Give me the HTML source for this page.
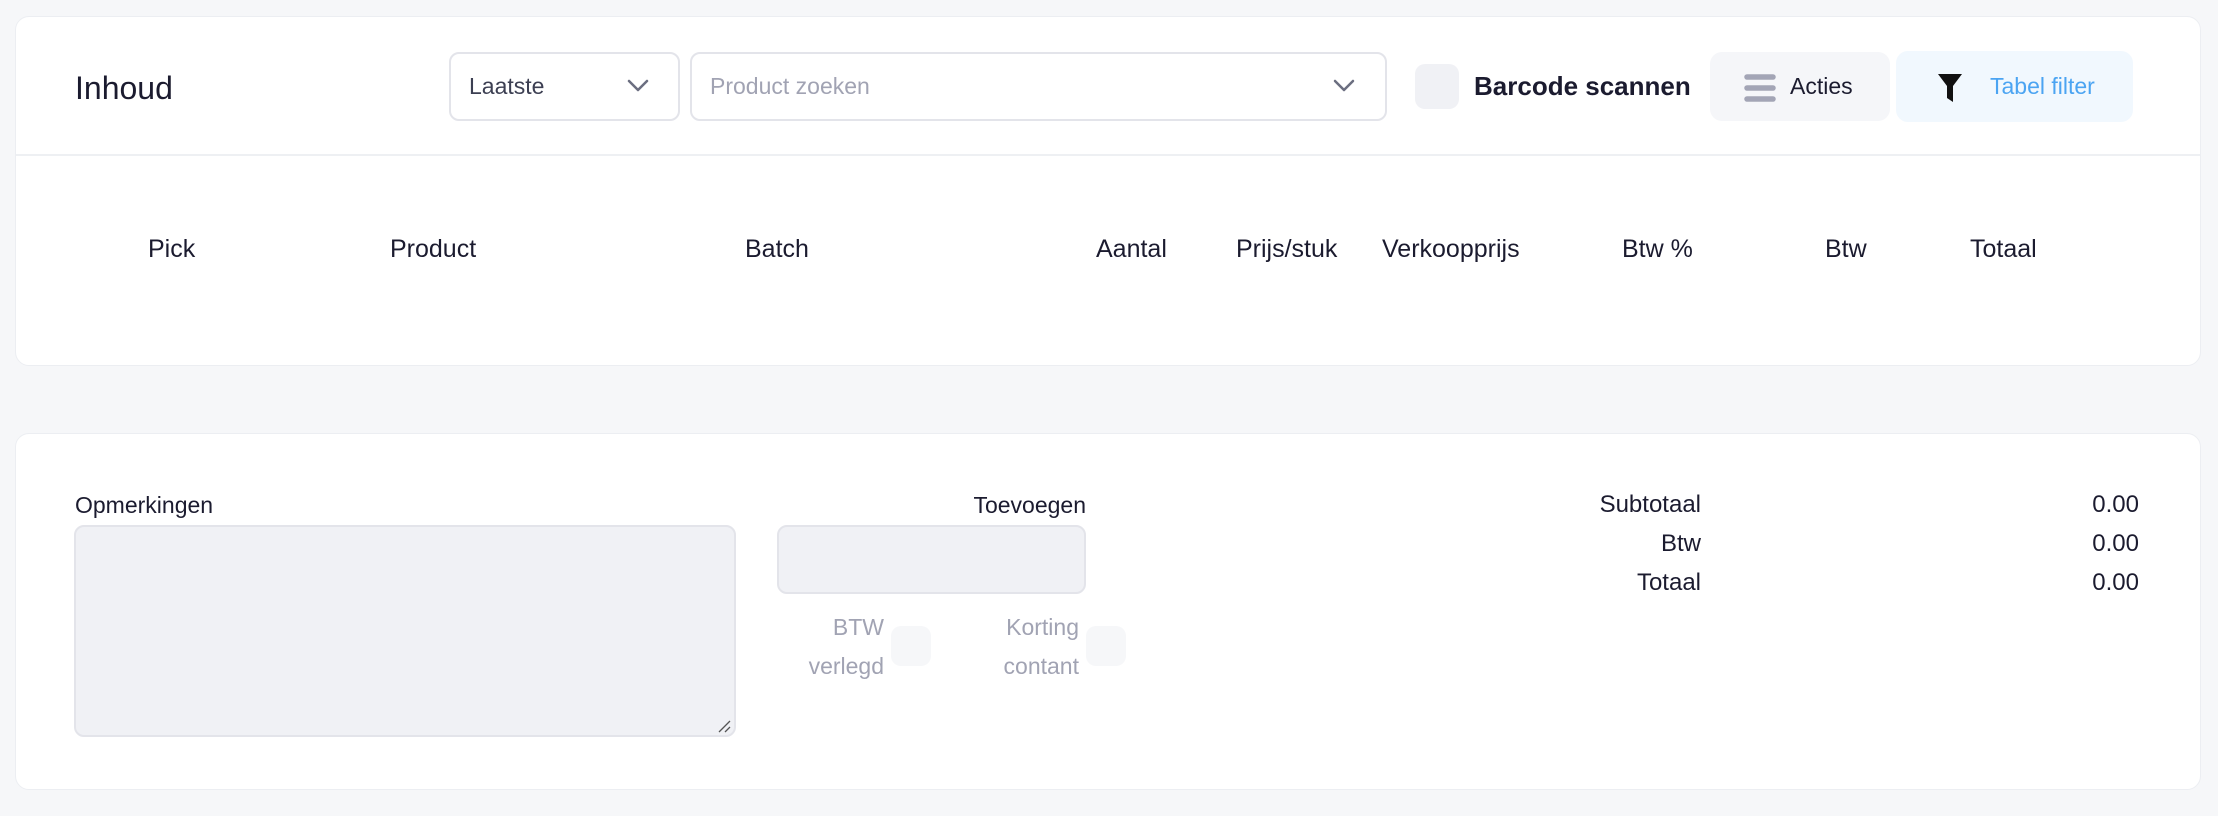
<!DOCTYPE html>
<html><head><meta charset="utf-8"><style>
*{box-sizing:border-box;margin:0;padding:0}
body{width:2218px;height:816px;background:#f6f7f9;font-family:"Liberation Sans",Arial,sans-serif;color:#1b1b2f;position:relative;overflow:hidden}
.card{position:absolute;background:#fff;border:1px solid #eceef2;border-radius:14px}
.a{position:absolute;white-space:nowrap;line-height:1}
.box{position:absolute;border:2px solid #e3e4ea;border-radius:10px;background:#fff}
.th{position:absolute;top:237px;font-size:25px;line-height:1}
.gray{color:#a1a3b3}
.r{text-align:right}
</style></head><body>
<div class="card" style="left:15px;top:16px;width:2186px;height:350px"></div>
<div style="position:absolute;left:16px;top:154px;width:2184px;height:2px;background:#eef0f3"></div>
<div class="a" style="left:75px;top:72px;font-size:32px">Inhoud</div>

<div class="box" style="left:449px;top:52px;width:231px;height:69px"></div>
<div class="a" style="left:469px;top:75px;font-size:23px;color:#3c3f52">Laatste</div>
<svg style="position:absolute;left:627px;top:79px" width="22" height="14" viewBox="0 0 22 14"><path d="M2 2l9 9 9-9" fill="none" stroke="#6b6e80" stroke-width="2.5" stroke-linecap="round" stroke-linejoin="round"/></svg>

<div class="box" style="left:690px;top:52px;width:697px;height:69px"></div>
<div class="a gray" style="left:710px;top:75px;font-size:23px">Product zoeken</div>
<svg style="position:absolute;left:1333px;top:79px" width="22" height="14" viewBox="0 0 22 14"><path d="M2 2l9 9 9-9" fill="none" stroke="#6b6e80" stroke-width="2.5" stroke-linecap="round" stroke-linejoin="round"/></svg>

<div style="position:absolute;left:1415px;top:64px;width:44px;height:45px;border-radius:10px;background:#f0f1f5"></div>
<div class="a" style="left:1474px;top:73px;font-size:26px;font-weight:bold">Barcode scannen</div>

<div style="position:absolute;left:1710px;top:52px;width:180px;height:69px;border-radius:12px;background:#f5f6f9"></div>
<svg style="position:absolute;left:1744px;top:73px" width="32" height="30" viewBox="0 0 32 30"><g stroke="#a3a5b6" stroke-width="5.5" stroke-linecap="round"><path d="M3 4h26M3 15h26M3 26h26"/></g></svg>
<div class="a" style="left:1790px;top:75px;font-size:23px">Acties</div>

<div style="position:absolute;left:1896px;top:51px;width:237px;height:71px;border-radius:12px;background:#f1f8fe"></div>
<svg style="position:absolute;left:1937px;top:73px" width="26" height="30" viewBox="0 0 26 30"><path d="M1 1h24L16 13v16l-6-4V13z" fill="#111"/></svg>
<div class="a" style="left:1990px;top:75px;font-size:23px;color:#4ba4f2">Tabel filter</div>

<div class="th" style="left:148px">Pick</div>
<div class="th" style="left:390px">Product</div>
<div class="th" style="left:745px">Batch</div>
<div class="th" style="left:1096px">Aantal</div>
<div class="th" style="left:1236px">Prijs/stuk</div>
<div class="th" style="left:1382px">Verkoopprijs</div>
<div class="th" style="left:1622px">Btw %</div>
<div class="th" style="left:1825px">Btw</div>
<div class="th" style="left:1970px">Totaal</div>

<div class="card" style="left:15px;top:433px;width:2186px;height:357px"></div>
<div class="a" style="left:75px;top:494px;font-size:23px">Opmerkingen</div>
<div style="position:absolute;left:74px;top:525px;width:662px;height:212px;border:2px solid #e3e4ea;border-radius:10px;background:#f0f1f5"></div>
<svg style="position:absolute;left:716px;top:718px" width="16" height="16" viewBox="0 0 16 16"><path d="M14 3L3 14M14 9L9 14" stroke="#555" stroke-width="1.3"/></svg>
<div class="a r" style="left:900px;width:186px;top:494px;font-size:23px">Toevoegen</div>
<div style="position:absolute;left:777px;top:525px;width:309px;height:69px;border:2px solid #e3e4ea;border-radius:10px;background:#f0f1f5"></div>
<div class="a gray r" style="left:760px;width:124px;top:608px;font-size:23px;line-height:39px;white-space:normal">BTW<br>verlegd</div>
<div style="position:absolute;left:891px;top:626px;width:40px;height:40px;border-radius:10px;background:#f6f7f9"></div>
<div class="a gray r" style="left:960px;width:119px;top:608px;font-size:23px;line-height:39px;white-space:normal">Korting<br>contant</div>
<div style="position:absolute;left:1086px;top:626px;width:40px;height:40px;border-radius:10px;background:#f6f7f9"></div>

<div class="a r" style="left:1500px;width:201px;top:493px;font-size:24px">Subtotaal</div>
<div class="a r" style="left:1500px;width:201px;top:532px;font-size:24px">Btw</div>
<div class="a r" style="left:1500px;width:201px;top:571px;font-size:24px">Totaal</div>
<div class="a r" style="left:1938px;width:201px;top:493px;font-size:24px">0.00</div>
<div class="a r" style="left:1938px;width:201px;top:532px;font-size:24px">0.00</div>
<div class="a r" style="left:1938px;width:201px;top:571px;font-size:24px">0.00</div>
</body></html>
